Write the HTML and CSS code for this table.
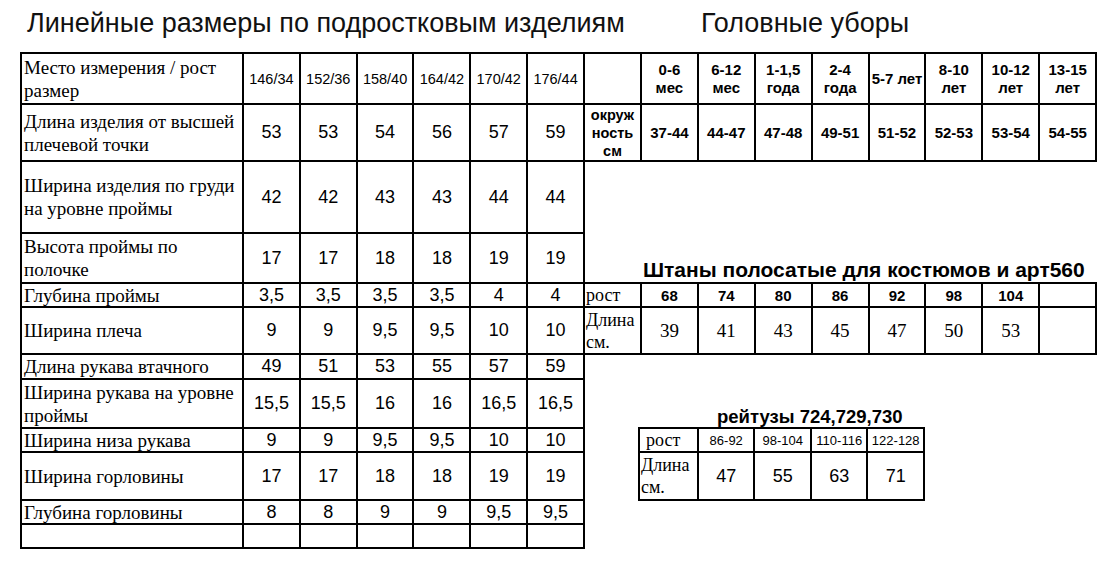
FILE: index.html
```html
<!DOCTYPE html>
<html lang="ru">
<head>
<meta charset="utf-8">
<title>Размеры</title>
<link rel="stylesheet" href="styles.css">
</head>
<body>
<header class="titles">
  <h1 class="title">Линейные размеры по подростковым изделиям</h1>
  <h1 class="title">Головные уборы</h1>
</header>
<main class="sheet">
  <section class="grid sizes">
    <div class="c lbl">Место измерения / рост<br>размер</div>
    <div class="c hd">146/34</div><div class="c hd">152/36</div><div class="c hd">158/40</div><div class="c hd">164/42</div><div class="c hd">170/42</div><div class="c hd">176/44</div>

    <div class="c lbl">Длина изделия от высшей<br>плечевой точки</div>
    <div class="c num">53</div><div class="c num">53</div><div class="c num">54</div><div class="c num">56</div><div class="c num">57</div><div class="c num">59</div>

    <div class="c lbl">Ширина изделия по груди<br>на уровне проймы</div>
    <div class="c num">42</div><div class="c num">42</div><div class="c num">43</div><div class="c num">43</div><div class="c num">44</div><div class="c num">44</div>

    <div class="c lbl">Высота проймы по<br>полочке</div>
    <div class="c num">17</div><div class="c num">17</div><div class="c num">18</div><div class="c num">18</div><div class="c num">19</div><div class="c num">19</div>

    <div class="c lbl">Глубина проймы</div>
    <div class="c num">3,5</div><div class="c num">3,5</div><div class="c num">3,5</div><div class="c num">3,5</div><div class="c num">4</div><div class="c num">4</div>

    <div class="c lbl">Ширина плеча</div>
    <div class="c num">9</div><div class="c num">9</div><div class="c num">9,5</div><div class="c num">9,5</div><div class="c num">10</div><div class="c num">10</div>

    <div class="c lbl">Длина рукава втачного</div>
    <div class="c num">49</div><div class="c num">51</div><div class="c num">53</div><div class="c num">55</div><div class="c num">57</div><div class="c num">59</div>

    <div class="c lbl">Ширина рукава на уровне<br>проймы</div>
    <div class="c num">15,5</div><div class="c num">15,5</div><div class="c num">16</div><div class="c num">16</div><div class="c num">16,5</div><div class="c num">16,5</div>

    <div class="c lbl">Ширина низа рукава</div>
    <div class="c num">9</div><div class="c num">9</div><div class="c num">9,5</div><div class="c num">9,5</div><div class="c num">10</div><div class="c num">10</div>

    <div class="c lbl">Ширина горловины</div>
    <div class="c num">17</div><div class="c num">17</div><div class="c num">18</div><div class="c num">18</div><div class="c num">19</div><div class="c num">19</div>

    <div class="c lbl">Глубина горловины</div>
    <div class="c num">8</div><div class="c num">8</div><div class="c num">9</div><div class="c num">9</div><div class="c num">9,5</div><div class="c num">9,5</div>

    <div class="c"></div><div class="c"></div><div class="c"></div><div class="c"></div><div class="c"></div><div class="c"></div><div class="c"></div>
  </section>

  <aside class="right">
    <section class="grid hats">
      <div class="c"></div>
      <div class="c">0-6<br>мес</div>
      <div class="c">6-12<br>мес</div>
      <div class="c">1-1,5<br>года</div>
      <div class="c">2-4<br>года</div>
      <div class="c">5-7 лет</div>
      <div class="c">8-10<br>лет</div>
      <div class="c">10-12<br>лет</div>
      <div class="c">13-15<br>лет</div>

      <div class="c circ">окруж<br>ность<br>см</div>
      <div class="c val">37-44</div>
      <div class="c val">44-47</div>
      <div class="c val">47-48</div>
      <div class="c val">49-51</div>
      <div class="c val">51-52</div>
      <div class="c val">52-53</div>
      <div class="c val">53-54</div>
      <div class="c val">54-55</div>
    </section>

    <h2 class="sub sub-pants">Штаны полосатые для костюмов и арт560</h2>
    <section class="grid pants">
      <div class="c key">рост</div>
      <div class="c bnum">68</div><div class="c bnum">74</div><div class="c bnum">80</div><div class="c bnum">86</div><div class="c bnum">92</div><div class="c bnum">98</div><div class="c bnum">104</div><div class="c"></div>
      <div class="c key">Длина<br>см.</div>
      <div class="c snum">39</div><div class="c snum">41</div><div class="c snum">43</div><div class="c snum">45</div><div class="c snum">47</div><div class="c snum">50</div><div class="c snum">53</div><div class="c"></div>
    </section>

    <h2 class="sub sub-leg">рейтузы 724,729,730</h2>
    <section class="grid leggings">
      <div class="c key key-in">рост</div>
      <div class="c small">86-92</div><div class="c small">98-104</div><div class="c small">110-116</div><div class="c small">122-128</div>
      <div class="c key">Длина<br>см.</div>
      <div class="c num">47</div><div class="c num">55</div><div class="c num">63</div><div class="c num">71</div>
    </section>
  </aside>
</main>
</body>
</html>
```

FILE: styles.css
```css
* { box-sizing: border-box; }

body {
  margin: 0;
  width: 1116px;
  height: 573px;
  overflow: hidden;
  background: #fff;
  color: #000;
  font-family: "Liberation Sans", Arial, sans-serif;
}

.titles {
  display: grid;
  grid-template-columns: 674px auto;
  height: 52px;
  padding: 8px 0 0 27px;
}

.title {
  margin: 0;
  font-weight: normal;
  font-size: 27px;
  line-height: 30px;
  color: #111;
  white-space: nowrap;
}

.sheet {
  display: flex;
  align-items: flex-start;
  padding-left: 20px;
}

.grid {
  display: grid;
  border-top: 2px solid #000;
  border-left: 2px solid #000;
}

.c {
  display: flex;
  align-items: center;
  justify-content: center;
  text-align: center;
  border-right: 2px solid #000;
  border-bottom: 2px solid #000;
  overflow: hidden;
  white-space: nowrap;
}

.sizes {
  grid-template-columns: 222px repeat(6, 56.83px);
  grid-template-rows: 51px 57px 72px 50px 24px 47px 25px 49px 24px 48px 24px 24px;
}

.lbl {
  justify-content: flex-start;
  text-align: left;
  padding-left: 2px;
  font-family: "Liberation Serif", "Times New Roman", serif;
  font-size: 19px;
  line-height: 23px;
}

.hd { font-size: 14.5px; }
.num { font-size: 18px; }

.right {
  margin-left: -2px;
  display: flex;
  flex-direction: column;
  align-items: flex-start;
}

.hats, .pants {
  grid-template-columns: 57px repeat(8, 56.9px);
}

.hats { grid-template-rows: 51px 57px; }

.hats .c {
  font-weight: bold;
  font-size: 15px;
  line-height: 18px;
}

.hats .circ { font-size: 14.5px; }

.sub {
  margin: 0;
  font-weight: bold;
  white-space: nowrap;
}

.sub-pants {
  margin-top: 96px;
  padding-left: 60px;
  font-size: 21px;
  line-height: 24px;
}

.pants { grid-template-rows: 24px 47px; }

.key {
  justify-content: flex-start;
  text-align: left;
  padding-left: 1px;
  font-family: "Liberation Serif", "Times New Roman", serif;
  font-size: 18px;
  line-height: 22px;
}

.key-in { padding-left: 6px; }

.bnum { font-weight: bold; font-size: 15px; }

.snum {
  font-family: "Liberation Serif", "Times New Roman", serif;
  font-size: 19px;
}

.sub-leg {
  margin-top: 51px;
  padding-left: 134px;
  font-size: 18.5px;
  line-height: 21px;
}

.leggings {
  margin-left: 55px;
  grid-template-columns: 59px repeat(4, 56.5px);
  grid-template-rows: 24px 48px;
}

.small { font-size: 13px; }
```
